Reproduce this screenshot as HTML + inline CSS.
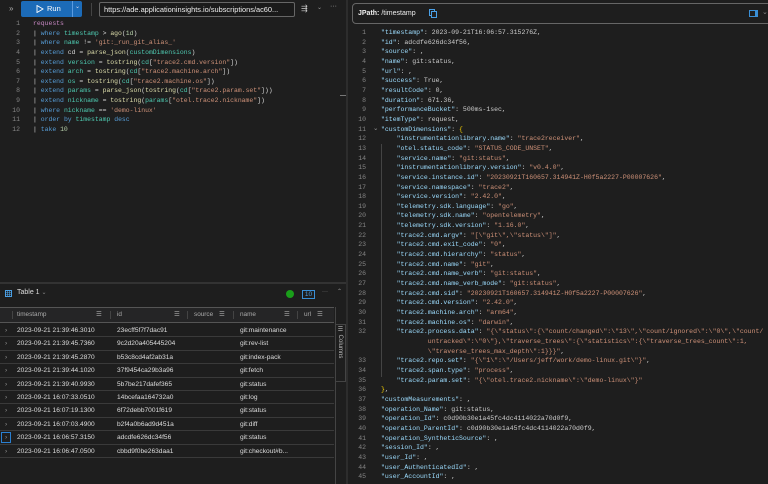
<!DOCTYPE html>
<html><head><meta charset="utf-8"><style>
*{margin:0;padding:0;box-sizing:border-box}
body{width:768px;height:484px;background:#1e1e1e;overflow:hidden;font-family:"Liberation Sans",sans-serif;color:#ccc;position:relative}
.abs{position:absolute}
.mono{font-family:"Liberation Mono",monospace;white-space:pre}
.ln{position:absolute;width:20px;text-align:right;color:#858585}
.code{position:absolute;font-family:"Liberation Mono",monospace;font-size:6.45px;line-height:9.64px}
.k{color:#c586c0}.b{color:#569cd6}.f{color:#dcdcaa}.c{color:#4ec9b0}.s{color:#ce9178}.n{color:#b5cea8}.v{color:#9cdcfe}
.jk{color:#9cdcfe}.js{color:#ce9178}.jv{color:#ccc}
.row{position:absolute;left:0;width:334px;height:13.4px;border-bottom:1px solid #3a3a3a;font-size:6.6px;line-height:13px;color:#ddd}
.row span{position:absolute}
</style></head><body>
<!-- left top bar -->
<div class="abs" style="left:9px;top:4px;font-size:8px;color:#aaa">»</div>
<div class="abs" style="left:21px;top:1px;width:61px;height:16px;background:#1c6bb8;border-radius:2px"></div>
<div class="abs" style="left:72px;top:1px;width:1px;height:16px;background:#5a9be0"></div>
<svg class="abs" style="left:36px;top:5px" width="8" height="8"><path d="M1 0.5 L7 4 L1 7.5 Z" fill="none" stroke="#fff" stroke-width="0.9"/></svg>
<div class="abs" style="left:47px;top:4px;font-size:7.5px;color:#fff">Run</div>
<div class="abs" style="left:75px;top:3px;font-size:6px;color:#dde">⌄</div>
<div class="abs" style="left:91px;top:3px;width:1px;height:13px;background:#444"></div>
<div class="abs" style="left:99px;top:2px;width:196px;height:15px;border:1px solid #666;border-radius:2px;background:#1a1a1a;font-size:7.4px;color:#eee;line-height:13px;padding-left:4px;white-space:nowrap;overflow:hidden">https://ade.applicationinsights.io/subscriptions/ac60...</div>
<div class="abs" style="left:301px;top:4px;font-size:8px;color:#ccc">⇶</div>
<div class="abs" style="left:317px;top:4px;font-size:6px;color:#999">⌄</div>
<div class="abs" style="left:330px;top:3px;font-size:7px;color:#aaa">···</div>
<!-- editor -->
<div class="code" style="left:0;top:19px;width:346px;height:116px">
<div class="ln" style="left:0;top:0">1<br>2<br>3<br>4<br>5<br>6<br>7<br>8<br>9<br>10<br>11<br>12</div>
<div class="mono" style="position:absolute;left:33px;top:0;color:#d4d4d4"><span class="k">requests</span>
| <span class="b">where</span> <span class="c">timestamp</span> &gt; <span class="f">ago</span>(<span class="n">1d</span>)
| <span class="b">where</span> <span class="c">name</span> != <span class="s">'git:_run_git_alias_'</span>
| <span class="b">extend</span> cd = <span class="f">parse_json</span>(<span class="c">customDimensions</span>)
| <span class="b">extend</span> <span class="c">version</span> = <span class="f">tostring</span>(<span class="c">cd</span>[<span class="s">"trace2.cmd.version"</span>])
| <span class="b">extend</span> <span class="c">arch</span> = <span class="f">tostring</span>(<span class="c">cd</span>[<span class="s">"trace2.machine.arch"</span>])
| <span class="b">extend</span> <span class="c">os</span> = <span class="f">tostring</span>(<span class="c">cd</span>[<span class="s">"trace2.machine.os"</span>])
| <span class="b">extend</span> <span class="c">params</span> = <span class="f">parse_json</span>(<span class="f">tostring</span>(<span class="c">cd</span>[<span class="s">"trace2.param.set"</span>]))
| <span class="b">extend</span> <span class="c">nickname</span> = <span class="f">tostring</span>(<span class="c">params</span>[<span class="s">"otel.trace2.nickname"</span>])
| <span class="b">where</span> <span class="c">nickname</span> == <span class="s">'demo-linux'</span>
| <span class="b">order</span> <span class="b">by</span> <span class="c">timestamp</span> <span class="b">desc</span>
| <span class="b">take</span> <span class="n">10</span></div>
</div>
<div class="abs" style="left:340px;top:95px;width:6px;height:1px;background:#777"></div>
<!-- divider -->
<div class="abs" style="left:346px;top:0;width:2px;height:484px;background:#2d2d2d"></div>
<div class="abs" style="left:0;top:282px;width:346px;height:2px;background:#333"></div>
<!-- table header bar -->
<svg class="abs" style="left:5px;top:290px" width="7" height="7"><rect x="0.5" y="0.5" width="6" height="6" fill="none" stroke="#4aa0e6"/><path d="M0.5 2.5H6.5M0.5 4.5H6.5M2.5 .5V6.5M4.5 .5V6.5" stroke="#4aa0e6" stroke-width="0.6"/></svg>
<div class="abs" style="left:17px;top:289px;font-size:7px;color:#ddd">Table 1 <span style="color:#888;font-size:6px">⌄</span></div>
<div class="abs" style="left:286px;top:290px;width:8px;height:8px;border-radius:50%;background:#1a9e1a"></div>
<div class="abs" style="left:302px;top:290px;width:13px;height:9px;border:1px solid #3a8fd6;font-size:6.5px;line-height:7px;text-align:center;color:#4aa0e6">10</div>
<div class="abs" style="left:322px;top:289px;font-size:6px;color:#888">···</div>
<div class="abs" style="left:337px;top:288px;font-size:6px;color:#999">⌃</div>
<!-- grid header -->
<div class="abs" style="left:0;top:307px;width:334px;height:16px;background:#252526;border-top:1px solid #555;border-bottom:1px solid #555;font-size:6.4px;color:#aaa;line-height:14px">
<span class="abs" style="left:17px">timestamp</span><span class="abs" style="left:96px">☰</span>
<span class="abs" style="left:12px;top:3px;width:1px;height:8px;background:#444"></span>
<span class="abs" style="left:110px;top:3px;width:1px;height:8px;background:#444"></span>
<span class="abs" style="left:117px">id</span><span class="abs" style="left:174px">☰</span>
<span class="abs" style="left:187px;top:3px;width:1px;height:8px;background:#444"></span>
<span class="abs" style="left:194px">source</span><span class="abs" style="left:219px">☰</span>
<span class="abs" style="left:233px;top:3px;width:1px;height:8px;background:#444"></span>
<span class="abs" style="left:240px">name</span><span class="abs" style="left:284px">☰</span>
<span class="abs" style="left:297px;top:3px;width:1px;height:8px;background:#444"></span>
<span class="abs" style="left:304px">url</span><span class="abs" style="left:317px">☰</span>
</div>
<div class="abs" style="left:335px;top:307px;width:11px;height:177px;border-left:1px solid #444;background:#1e1e1e"></div>
<div class="abs" style="left:335px;top:324px;width:11px;height:58px;border:1px solid #444;"></div>
<div class="abs" style="left:337px;top:326px;font-size:6px;color:#bbb;writing-mode:vertical-rl">☰ Columns</div>
<!-- rows -->
<div class="row" style="top:324px"><span style="left:5px;color:#999">›</span><span style="left:17px">2023-09-21 21:39:46.3010</span><span style="left:117px">23ecff5f7f7dac91</span><span style="left:240px">git:maintenance</span></div>
<div class="row" style="top:337.4px"><span style="left:5px;color:#999">›</span><span style="left:17px">2023-09-21 21:39:45.7360</span><span style="left:117px">9c2d20a405445204</span><span style="left:240px">git:rev-list</span></div>
<div class="row" style="top:350.8px"><span style="left:5px;color:#999">›</span><span style="left:17px">2023-09-21 21:39:45.2870</span><span style="left:117px">b53c8cd4af2ab31a</span><span style="left:240px">git:index-pack</span></div>
<div class="row" style="top:364.2px"><span style="left:5px;color:#999">›</span><span style="left:17px">2023-09-21 21:39:44.1020</span><span style="left:117px">37f9454ca29b3a96</span><span style="left:240px">git:fetch</span></div>
<div class="row" style="top:377.6px"><span style="left:5px;color:#999">›</span><span style="left:17px">2023-09-21 21:39:40.9930</span><span style="left:117px">5b7be217dafef365</span><span style="left:240px">git:status</span></div>
<div class="row" style="top:391px"><span style="left:5px;color:#999">›</span><span style="left:17px">2023-09-21 16:07:33.0510</span><span style="left:117px">14bcefaa164732a0</span><span style="left:240px">git:log</span></div>
<div class="row" style="top:404.4px"><span style="left:5px;color:#999">›</span><span style="left:17px">2023-09-21 16:07:19.1300</span><span style="left:117px">6f72debb7001f619</span><span style="left:240px">git:status</span></div>
<div class="row" style="top:417.8px"><span style="left:5px;color:#999">›</span><span style="left:17px">2023-09-21 16:07:03.4900</span><span style="left:117px">b2f4a0b6ad9d451a</span><span style="left:240px">git:diff</span></div>
<div class="row" style="top:431.2px"><span style="left:1px;top:1px;width:10px;height:11px;border:1px solid #2a7fd0"></span><span style="left:5px;color:#999">›</span><span style="left:17px">2023-09-21 16:06:57.3150</span><span style="left:117px">adcdfe626dc34f56</span><span style="left:240px">git:status</span></div>
<div class="row" style="top:444.6px"><span style="left:5px;color:#999">›</span><span style="left:17px">2023-09-21 16:06:47.0500</span><span style="left:117px">cbbd9f0be263daa1</span><span style="left:240px">git:checkout#b...</span></div>
<!-- right pane -->
<div class="abs" style="left:352px;top:3px;width:430px;height:21px;border:1px solid #666;border-radius:4px;background:#1e1e1e"></div>
<div class="abs" style="left:358px;top:10px;font-size:7px;color:#eee"><b>JPath:</b> /timestamp</div>
<svg class="abs" style="left:429px;top:9px" width="8" height="9"><rect x="0.5" y="0.5" width="5" height="6" fill="none" stroke="#4aa0e6"/><rect x="2.5" y="2.5" width="5" height="6" fill="#1e1e1e" stroke="#4aa0e6"/></svg>
<div class="abs" style="left:749px;top:10px;width:9px;height:7px;border:1px solid #3a8fd6;border-right-width:3px"></div>
<div class="abs" style="left:762px;top:8px;font-size:7px;color:#888">⌄</div>
<div class="code" style="left:348px;top:28px;width:420px;font-size:6.5px;line-height:9.66px;color:#ccc">
<div class="ln" style="left:-2px;top:0">1<br>2<br>3<br>4<br>5<br>6<br>7<br>8<br>9<br>10<br>11<br>12<br>13<br>14<br>15<br>16<br>17<br>18<br>19<br>20<br>21<br>22<br>23<br>24<br>25<br>26<br>27<br>28<br>29<br>30<br>31<br>32<br><br><br>33<br>34<br>35<br>36<br>37<br>38<br>39<br>40<br>41<br>42<br>43<br>44<br>45</div>
<div class="abs" style="left:25px;top:96px;color:#999">⌄</div>
<div class="abs" style="left:33px;top:116px;width:1px;height:233px;background:#444"></div>
<div class="abs mono" style="left:33px;top:0"><span class="jk">"timestamp"</span>: 2023-09-21T16:06:57.315276Z,
<span class="jk">"id"</span>: adcdfe626dc34f56,
<span class="jk">"source"</span>: ,
<span class="jk">"name"</span>: git:status,
<span class="jk">"url"</span>: ,
<span class="jk">"success"</span>: True,
<span class="jk">"resultCode"</span>: 0,
<span class="jk">"duration"</span>: 671.36,
<span class="jk">"performanceBucket"</span>: 500ms-1sec,
<span class="jk">"itemType"</span>: request,
<span class="jk">"customDimensions"</span>: <span style="color:#ffd700">{</span>
    <span class="jk">"instrumentationlibrary.name"</span>: <span class="js">"trace2receiver"</span>,
    <span class="jk">"otel.status_code"</span>: <span class="js">"STATUS_CODE_UNSET"</span>,
    <span class="jk">"service.name"</span>: <span class="js">"git:status"</span>,
    <span class="jk">"instrumentationlibrary.version"</span>: <span class="js">"v0.4.0"</span>,
    <span class="jk">"service.instance.id"</span>: <span class="js">"20230921T160657.314941Z-H0f5a2227-P00007626"</span>,
    <span class="jk">"service.namespace"</span>: <span class="js">"trace2"</span>,
    <span class="jk">"service.version"</span>: <span class="js">"2.42.0"</span>,
    <span class="jk">"telemetry.sdk.language"</span>: <span class="js">"go"</span>,
    <span class="jk">"telemetry.sdk.name"</span>: <span class="js">"opentelemetry"</span>,
    <span class="jk">"telemetry.sdk.version"</span>: <span class="js">"1.16.0"</span>,
    <span class="jk">"trace2.cmd.argv"</span>: <span class="js">"[\"git\",\"status\"]"</span>,
    <span class="jk">"trace2.cmd.exit_code"</span>: <span class="js">"0"</span>,
    <span class="jk">"trace2.cmd.hierarchy"</span>: <span class="js">"status"</span>,
    <span class="jk">"trace2.cmd.name"</span>: <span class="js">"git"</span>,
    <span class="jk">"trace2.cmd.name_verb"</span>: <span class="js">"git:status"</span>,
    <span class="jk">"trace2.cmd.name_verb_mode"</span>: <span class="js">"git:status"</span>,
    <span class="jk">"trace2.cmd.sid"</span>: <span class="js">"20230921T160657.314941Z-H0f5a2227-P00007626"</span>,
    <span class="jk">"trace2.cmd.version"</span>: <span class="js">"2.42.0"</span>,
    <span class="jk">"trace2.machine.arch"</span>: <span class="js">"arm64"</span>,
    <span class="jk">"trace2.machine.os"</span>: <span class="js">"darwin"</span>,
    <span class="jk">"trace2.process.data"</span>: <span class="js">"{\"status\":{\"count/changed\":\"13\",\"count/ignored\":\"0\",\"count/</span>
<span class="js">            untracked\":\"0\"},\"traverse_trees\":{\"statistics\":{\"traverse_trees_count\":1,</span>
<span class="js">            \"traverse_trees_max_depth\":1}}}"</span>,
    <span class="jk">"trace2.repo.set"</span>: <span class="js">"{\"1\":\"/Users/jeff/work/demo-linux.git\"}"</span>,
    <span class="jk">"trace2.span.type"</span>: <span class="js">"process"</span>,
    <span class="jk">"trace2.param.set"</span>: <span class="js">"{\"otel.trace2.nickname\":\"demo-linux\"}"</span>
<span style="color:#ffd700">}</span>,
<span class="jk">"customMeasurements"</span>: ,
<span class="jk">"operation_Name"</span>: git:status,
<span class="jk">"operation_Id"</span>: c0d90b30e1a45fc4dc4114022a70d0f9,
<span class="jk">"operation_ParentId"</span>: c0d90b30e1a45fc4dc4114022a70d0f9,
<span class="jk">"operation_SyntheticSource"</span>: ,
<span class="jk">"session_Id"</span>: ,
<span class="jk">"user_Id"</span>: ,
<span class="jk">"user_AuthenticatedId"</span>: ,
<span class="jk">"user_AccountId"</span>: ,</div>
</div>
</body></html>
